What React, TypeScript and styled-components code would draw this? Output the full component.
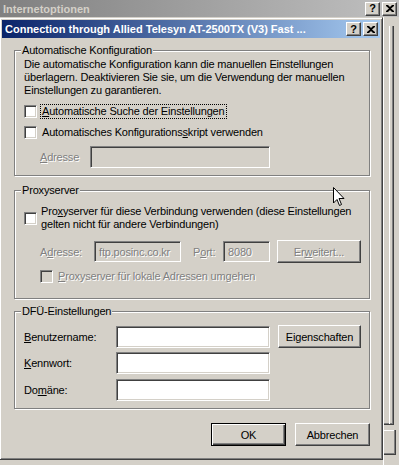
import React from 'react'
import styled, { createGlobalStyle, css } from 'styled-components'

const FACE = '#d4d0c8'
const SHADOW = '#808080'
const DARK = '#404040'

const GlobalStyle = createGlobalStyle`
  html, body { margin: 0; padding: 0; background: ${FACE}; }
  body {
    font-family: "Liberation Sans", Arial, sans-serif;
    font-size: 11px;
    letter-spacing: -0.18px;
    color: #000;
  }
  * { box-sizing: border-box; }
`

const raised = css`
  border: 1px solid;
  border-color: #fff ${DARK} ${DARK} #fff;
  box-shadow: inset -1px -1px 0 ${SHADOW};
`

const sunken = css`
  border: 1px solid;
  border-color: ${SHADOW} #fff #fff ${SHADOW};
  box-shadow: inset 1px 1px 0 ${DARK}, inset -1px -1px 0 ${FACE};
`

const disabledText = css`
  color: ${SHADOW};
  text-shadow: 1px 1px 0 #fff;
`

const Screen = styled.div`
  position: relative;
  width: 399px;
  height: 465px;
  overflow: hidden;
  display: flex;
  flex-direction: column;
  background: ${FACE};
`

// the inactive "Internetoptionen" window behind
const BackTitle = styled.div`
  height: 17px;
  flex-shrink: 0;
  display: flex;
  align-items: center;
  padding: 0 2px 0 3px;
  background: linear-gradient(to right, #808080, #c0c0c0);
  color: #d4d0c8;
  font-weight: bold;
  letter-spacing: 0;
`

const TitleText = styled.span`
  flex: 1;
  white-space: nowrap;
  overflow: hidden;
`

const CaptionButtons = styled.div`
  display: flex;
  gap: 2px;
`

const CaptionBtn = styled.div`
  width: 15px;
  height: 14px;
  background: ${FACE};
  ${raised};
  display: flex;
  align-items: center;
  justify-content: center;
  color: #000;
  font-weight: bold;
  font-size: 11px;
  line-height: 1;
`

const Desk = styled.div`
  flex: 1;
  display: flex;
`

const Dialog = styled.div`
  margin-left: -1px;
  width: 384px;
  height: 443px;
  flex-shrink: 0;
  padding: 2px;
  background: ${FACE};
  border: 1px solid;
  border-color: ${FACE} ${DARK} ${DARK} ${FACE};
  box-shadow: inset 1px 1px 0 #fff, inset -1px -1px 0 ${SHADOW};
  display: flex;
  flex-direction: column;
`

const TitleBar = styled.div`
  height: 18px;
  display: flex;
  align-items: center;
  padding: 0 2px 0 3px;
  background: linear-gradient(to right, #0a246a, #a6caf0);
  color: #fff;
  font-weight: bold;
  letter-spacing: 0;
`

const Content = styled.div`
  padding: 12px 10px 0 12px;
  display: flex;
  flex-direction: column;
`

const Group = styled.div<{ $gap?: number; $bottom?: number }>`
  margin-top: ${p => p.$gap ?? 0}px;
  border: 1px solid ${SHADOW};
  box-shadow: inset 1px 1px 0 #fff, 1px 1px 0 #fff;
  padding: 0 9px ${p => p.$bottom ?? 7}px 9px;
  display: flex;
  flex-direction: column;
`

const Legend = styled.div`
  margin: -7px 0 0 -3px;
  padding: 0 1px;
  width: fit-content;
  line-height: 13px;
  background: ${FACE};
  white-space: nowrap;
`

const Desc = styled.div`
  margin-top: 1px;
  line-height: 13px;
  white-space: nowrap;
`

const Row = styled.div<{ $top: number; $indent?: number; $h?: number }>`
  display: flex;
  align-items: center;
  margin-top: ${p => p.$top}px;
  margin-left: ${p => p.$indent ?? 0}px;
  min-height: ${p => p.$h ?? 17}px;
  white-space: nowrap;
`

const CheckBox = styled.span<{ $disabled?: boolean }>`
  width: 13px;
  height: 13px;
  flex-shrink: 0;
  background: ${p => (p.$disabled ? FACE : '#fff')};
  ${sunken};
`

const CheckLabel = styled.span<{ $focus?: boolean; $disabled?: boolean }>`
  margin-left: 3px;
  padding: 0 1px;
  line-height: 13px;
  border: 1px dotted ${p => (p.$focus ? '#000' : 'transparent')};
  ${p => p.$disabled && disabledText};
`

const Label = styled.span<{ $w: number; $disabled?: boolean; $left?: number }>`
  width: ${p => p.$w}px;
  margin-left: ${p => p.$left ?? 0}px;
  flex-shrink: 0;
  ${p => p.$disabled && disabledText};
`

const Field = styled.div<{ $w: number; $disabled?: boolean; $h?: number }>`
  width: ${p => p.$w}px;
  height: ${p => p.$h ?? 22}px;
  flex-shrink: 0;
  background: ${p => (p.$disabled ? FACE : '#fff')};
  ${sunken};
  padding: 0 4px;
  display: flex;
  align-items: center;
  ${p => p.$disabled && disabledText};
`

const Button = styled.div<{ $w: number; $default?: boolean; $disabled?: boolean; $left?: number }>`
  width: ${p => p.$w}px;
  height: 23px;
  flex-shrink: 0;
  margin-left: ${p => p.$left ?? 0}px;
  display: flex;
  align-items: center;
  justify-content: center;
  background: ${FACE};
  ${p =>
    p.$default
      ? css`
          border: 1px solid #000;
          box-shadow: inset 1px 1px 0 #fff, inset -1px -1px 0 ${DARK}, inset -2px -2px 0 ${SHADOW};
        `
      : raised};
  ${p => p.$disabled && disabledText};
`

const ButtonRow = styled.div`
  margin-top: 14px;
  display: flex;
  justify-content: flex-end;
  gap: 9px;
`

const TwoLines = styled.span`
  margin-left: 4px;
  line-height: 13px;
`

// what shows of the background window right of the dialog
const BackStrip = styled.div`
  flex: 1;
  display: flex;
  flex-direction: column;
  padding: 9px 0 0 0;
  border-left: 1px solid #fff;
`

const Sheet = styled.div`
  height: 399px;
  width: 10px;
  border-right: 1px solid ${DARK};
  border-bottom: 1px solid ${DARK};
  box-shadow: inset -1px -1px 0 ${SHADOW};
  display: flex;
`

const SheetLine = styled.div`
  margin-left: 5px;
  width: 1px;
  background: #fff;
`

const BackButton = styled.div`
  margin-top: 5px;
  width: 12px;
  height: 25px;
  background: ${FACE};
  border-right: 1px solid ${DARK};
  border-bottom: 1px solid ${DARK};
  box-shadow: inset -1px -1px 0 ${SHADOW}, inset 0 1px 0 #fff;
`

const Cursor = styled.svg`
  position: absolute;
  left: 333px;
  top: 187px;
`

const CloseGlyph = () => (
  <svg width="8" height="7" viewBox="0 0 8 7">
    <path d="M0 0h2l2 2 2-2h2v1L5 3.5 8 6v1H6L4 5 2 7H0V6l3-2.5L0 1z" fill="#000" />
  </svg>
)

export default function App() {
  return (
    <>
      <GlobalStyle />
      <Screen>
        <BackTitle>
          <TitleText>Internetoptionen</TitleText>
          <CaptionButtons>
            <CaptionBtn>?</CaptionBtn>
            <CaptionBtn>
              <CloseGlyph />
            </CaptionBtn>
          </CaptionButtons>
        </BackTitle>

        <Desk>
          <Dialog>
            <TitleBar>
              <TitleText>Connection through Allied Telesyn AT-2500TX (V3) Fast ...</TitleText>
              <CaptionButtons>
                <CaptionBtn>?</CaptionBtn>
                <CaptionBtn>
                  <CloseGlyph />
                </CaptionBtn>
              </CaptionButtons>
            </TitleBar>

            <Content>
              <Group>
                <Legend>Automatische Konfiguration</Legend>
                <Desc>
                  Die automatische Konfiguration kann die manuellen Einstellungen
                  <br />
                  überlagern. Deaktivieren Sie sie, um die Verwendung der manuellen
                  <br />
                  Einstellungen zu garantieren.
                </Desc>
                <Row $top={6}>
                  <CheckBox />
                  <CheckLabel $focus>
                    <u>A</u>utomatische Suche der Einstellungen
                  </CheckLabel>
                </Row>
                <Row $top={4}>
                  <CheckBox />
                  <CheckLabel>
                    Automatisches Konfigurations<u>s</u>kript verwenden
                  </CheckLabel>
                </Row>
                <Row $top={5} $indent={16}>
                  <Label $w={50} $disabled>
                    <u>A</u>dresse
                  </Label>
                  <Field $w={180} $disabled />
                </Row>
              </Group>

              <Group $gap={14} $bottom={13}>
                <Legend>Proxyserver</Legend>
                <Row $top={8}>
                  <CheckBox />
                  <TwoLines>
                    Pro<u>x</u>yserver für diese Verbindung verwenden (diese Einstellungen
                    <br />
                    gelten nicht für andere Verbindungen)
                  </TwoLines>
                </Row>
                <Row $top={9} $indent={16} $h={23}>
                  <Label $w={54} $disabled>
                    A<u>d</u>resse:
                  </Label>
                  <Field $w={87} $h={21} $disabled>
                    ftp.posinc.co.kr
                  </Field>
                  <Label $w={30} $left={12} $disabled>
                    P<u>o</u>rt:
                  </Label>
                  <Field $w={47} $h={21} $disabled>
                    8080
                  </Field>
                  <Button $w={84} $left={7} $disabled>
                    Er<u>w</u>eitert...
                  </Button>
                </Row>
                <Row $top={5} $indent={16}>
                  <CheckBox $disabled />
                  <CheckLabel $disabled>
                    <u>P</u>roxyserver für lokale Adressen umgehen
                  </CheckLabel>
                </Row>
              </Group>

              <Group $gap={12}>
                <Legend>DFÜ-Einstellungen</Legend>
                <Row $top={7}>
                  <Label $w={92}>
                    <u>B</u>enutzername:
                  </Label>
                  <Field $w={154} />
                  <Button $w={83} $left={8}>
                    Eigenschaften
                  </Button>
                </Row>
                <Row $top={4}>
                  <Label $w={92}>
                    <u>K</u>ennwort:
                  </Label>
                  <Field $w={154} />
                </Row>
                <Row $top={5}>
                  <Label $w={92}>
                    Do<u>m</u>äne:
                  </Label>
                  <Field $w={154} />
                </Row>
              </Group>

              <ButtonRow>
                <Button $w={75} $default>
                  OK
                </Button>
                <Button $w={75}>Abbrechen</Button>
              </ButtonRow>
            </Content>
          </Dialog>

          <BackStrip>
            <Sheet>
              <SheetLine />
            </Sheet>
            <BackButton />
          </BackStrip>
        </Desk>

        <Cursor width="12" height="20" viewBox="0 0 12 20">
          <path d="M0.5 0.5 L0.5 16 L4 12.5 L6.5 18.5 L8.5 17.5 L6 11.5 L11 11.5 Z" fill="#fff" stroke="#000" />
        </Cursor>
      </Screen>
    </>
  )
}
